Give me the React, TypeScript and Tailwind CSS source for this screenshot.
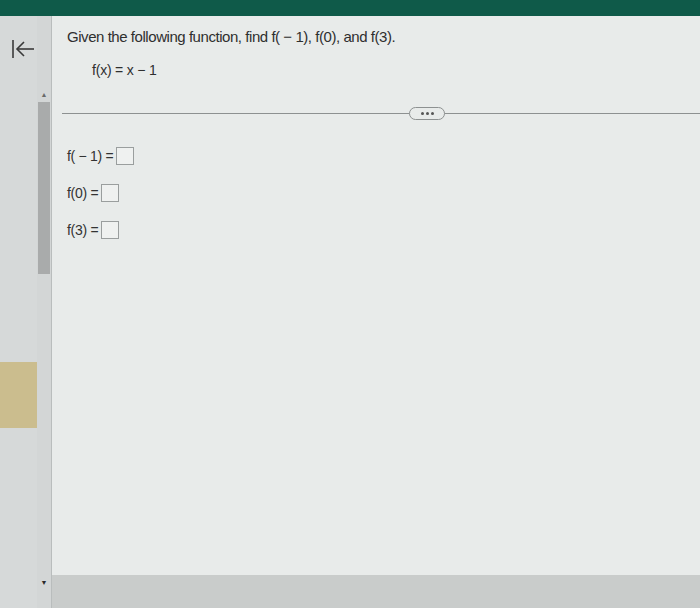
export default function App() {
  const font = { fontFamily: '"Liberation Sans", Arial, sans-serif' };
  return (
    <div className="w-[700px] h-[608px] flex flex-col bg-[#c9cccb] overflow-hidden" style={font}>
      {/* top bar */}
      <div className="h-[16px] bg-[#0f5a49] shrink-0" />
      <div className="flex flex-1 min-h-0">
        {/* left rail */}
        <div className="w-[37px] flex flex-col bg-[#d6d9d9] shrink-0">
          <div className="h-[22px]" />
          <svg width="26" height="22" viewBox="0 0 26 22" className="ml-[10px]">
            <line x1="3" y1="2" x2="3" y2="20" stroke="#3a3a3a" strokeWidth="1.6" />
            <line x1="7" y1="11" x2="24" y2="11" stroke="#3a3a3a" strokeWidth="1.6" />
            <polyline points="14,4 7,11 14,18" fill="none" stroke="#3a3a3a" strokeWidth="1.6" />
          </svg>
          <div className="h-[302px]" />
          <div className="h-[66px] bg-[#cbbd8e]" />
          <div className="flex-1" />
        </div>
        {/* scrollbar */}
        <div className="w-[15px] flex flex-col bg-[#d3d6d6] border-r border-[#b9bdbd] shrink-0">
          <div className="h-[72px]" />
          <div className="h-[14px] flex items-center justify-center text-[7px] text-[#6a6a6a]">▲</div>
          <div className="mx-[1px] h-[172px] bg-[#a9abab]" />
          <div className="flex-1" />
          <div className="h-[14px] flex items-center justify-center text-[7px] text-[#2a2a2a]">▼</div>
          <div className="h-[18px]" />
        </div>
        {/* content */}
        <div className="flex-1 flex flex-col bg-[#e8ebea]">
          <div className="pl-[15px] pt-[10px] text-[15px] text-[#2f2f2f] tracking-[-0.45px]">
            Given the following function, find f( − 1), f(0), and f(3).
          </div>
          <div className="pl-[40px] pt-[11px] text-[14px] text-[#2f2f2f] tracking-[-0.2px]">f(x) = x − 1</div>
          <div className="relative mt-[32px] ml-[10px] h-[1px] bg-[#8d9191]">
            <div className="absolute left-[347px] top-[-6px] w-[36px] h-[13px] rounded-full border border-[#8d9191] bg-[#e8ebea] flex items-center justify-center gap-[2px]">
              <span className="w-[3px] h-[3px] bg-[#555] rounded-full" />
              <span className="w-[3px] h-[3px] bg-[#555] rounded-full" />
              <span className="w-[3px] h-[3px] bg-[#555] rounded-full" />
            </div>
          </div>
          <div className="pl-[15px] pt-[32px] flex flex-col gap-[16px] text-[14px] text-[#333] tracking-[-0.3px]">
            <div className="flex items-center gap-[3px]">
              <span>f( − 1) =</span>
              <span className="w-[18px] h-[18px] border border-[#9a9e9e] bg-[#eff1f0]" />
            </div>
            <div className="flex items-center gap-[3px]">
              <span>f(0) =</span>
              <span className="w-[18px] h-[18px] border border-[#9a9e9e] bg-[#eff1f0]" />
            </div>
            <div className="flex items-center gap-[3px]">
              <span>f(3) =</span>
              <span className="w-[18px] h-[18px] border border-[#9a9e9e] bg-[#eff1f0]" />
            </div>
          </div>
          <div className="flex-1" />
          <div className="h-[33px] bg-[#c9cccb]" />
        </div>
      </div>
    </div>
  );
}
